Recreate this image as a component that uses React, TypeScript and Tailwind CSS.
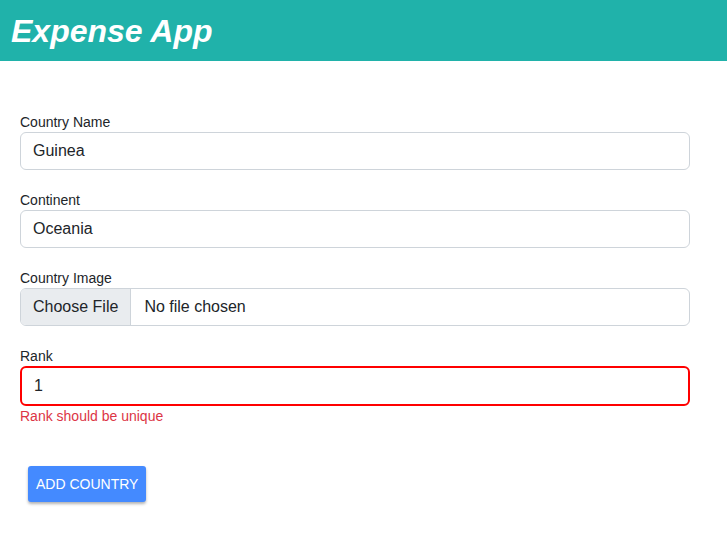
import { useState } from "react";

const inputClass =
  "block h-[38px] w-full rounded-[6px] border border-[#ced4da] bg-white px-3 text-base text-[#212529] outline-none";

const labelClass = "block pt-[2px] text-sm leading-[19px]";

export default function App() {
  const [name, setName] = useState("Guinea");
  const [continent, setContinent] = useState("Oceania");
  const [rank, setRank] = useState("1");

  return (
    <div className="min-h-[546px] bg-white font-['Liberation_Sans',Arial,sans-serif] text-[#212529]">
      <header className="flex h-[61px] items-center bg-[#20b2aa] px-[11px]">
        <h1 className="text-[32px] font-bold italic leading-none text-white">Expense App</h1>
      </header>

      <form className="w-[690px] pl-[20px] pt-[50px]" onSubmit={(e) => e.preventDefault()}>
        <div className="mb-[19px]">
          <label className={labelClass}>Country Name</label>
          <input className={inputClass} value={name} onChange={(e) => setName(e.target.value)} />
        </div>

        <div className="mb-[19px]">
          <label className={labelClass}>Continent</label>
          <input
            className={inputClass}
            value={continent}
            onChange={(e) => setContinent(e.target.value)}
          />
        </div>

        <div className="mb-[19px]">
          <label className={labelClass}>Country Image</label>
          <label className="flex h-[38px] w-full overflow-hidden rounded-[6px] border border-[#ced4da] text-base">
            <span className="flex items-center border-r border-[#ced4da] bg-[#e9ecef] px-3">
              Choose File
            </span>
            <span className="flex items-center px-[13px]">No file chosen</span>
            <input type="file" className="hidden" />
          </label>
        </div>

        <div>
          <label className={labelClass}>Rank</label>
          <input
            className="block h-[40px] w-full rounded-[6px] border-2 border-[#ff0000] bg-white px-3 text-base outline-none"
            value={rank}
            onChange={(e) => setRank(e.target.value)}
          />
          <p className="text-sm leading-[21px] text-[#dc3545]">Rank should be unique</p>
        </div>

        <button
          type="submit"
          className="ml-[8px] mt-[39px] h-[36px] rounded-[3px] bg-[#448aff] px-[8px] text-sm uppercase text-white shadow-[0_2px_3px_rgba(0,0,0,0.3)]"
        >
          Add Country
        </button>
      </form>
    </div>
  );
}
